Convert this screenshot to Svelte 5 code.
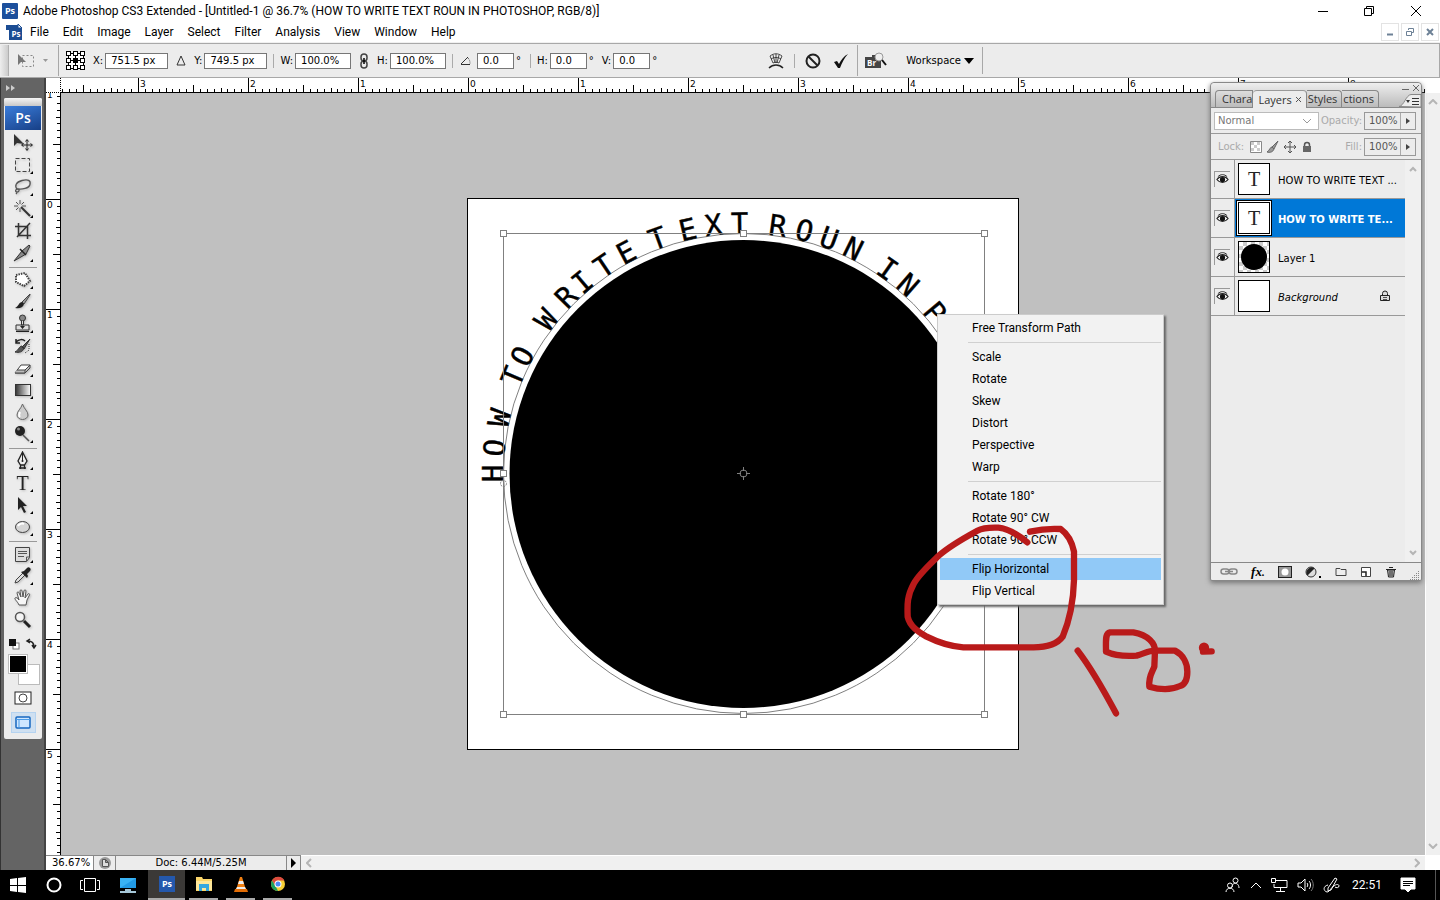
<script>
  const menus = ['File', 'Edit', 'Image', 'Layer', 'Select', 'Filter', 'Analysis', 'View', 'Window', 'Help'];

  const contextMenu = [
    ['Free Transform Path'],
    ['Scale', 'Rotate', 'Skew', 'Distort', 'Perspective', 'Warp'],
    ['Rotate 180°', 'Rotate 90° CW', 'Rotate 90° CCW'],
    ['Flip Horizontal', 'Flip Vertical']
  ];
  let hovered = $state('Flip Horizontal');

  let layers = $state([
    { name: 'HOW TO WRITE TEXT ...', kind: 'text' },
    { name: 'HOW TO WRITE TE...', kind: 'text' },
    { name: 'Layer 1', kind: 'shape' },
    { name: 'Background', kind: 'background' }
  ]);
  let selected = $state(1);

  // 20x20 tool glyphs
  const toolGroups = [
    [
      ['Move', '<path d="M1 1v12l3-3 7 1z" fill="#333"/><path d="M14 7v10M9 12h10M12.500 8.500l1.500-2 1.500 2M12.500 15.500l1.500 2 1.500-2M10.500 10.500l-2 1.500 2 1.500M17.500 10.500l2 1.500-2 1.500" fill="none" stroke="#222"/>'],
      ['Rectangular Marquee', '<rect x="2.500" y="3.500" width="14" height="13" fill="none" stroke="#444" stroke-dasharray="4 2"/>', 1],
      ['Lasso', '<path d="M4.500 12.500C1 9 3 5 9 3.500s9 0 8 4-8 5-12 4.500c-3 0-3 3-1 3s3-2 1-3M4 15c0 1-1 2-1 2" fill="none" stroke="#555" stroke-width="1.300"/>', 1],
      ['Magic Wand', '<path d="M8 8l9 9" stroke="#333" stroke-width="2"/><path d="M7 1v4M7 9v4M1 7h4M9 7h4M3 3l2.500 2.500M11 3L8.500 5.500M3 11l2.500-2.500" stroke="#555"/>', 1],
      ['Crop', '<path d="M2 5.500h12.500V18M5.500 2v12.500H18M4 16L17 2" fill="none" stroke="#333" stroke-width="1.500"/>'],
      ['Slice', '<path d="M1 18L9 8l7-6 1 1-4 8z" fill="#888" stroke="#333"/><path d="M7 6l6 6" stroke="#222" stroke-width="1.500"/>', 1]
    ],
    [
      ['Patch', '<path d="M3 5l9-2 5 8-6 5-8-4z" fill="#fff" stroke="#444" stroke-width="2" stroke-dasharray="1.500 1"/>', 1],
      ['Brush', '<path d="M17 2l-8 8 2 2 6-9z" fill="#999" stroke="#444"/><path d="M9 10c-3 0-3 4-7 6 4 1 8 0 9-4z" fill="#222"/>', 1],
      ['Clone Stamp', '<circle cx="9.500" cy="4" r="3" fill="#888" stroke="#333"/><path d="M8.500 7v4h2V7M3 11h13v5H3z" fill="#ddd" stroke="#333"/><path d="M7 12h5l-2.500 3zM3 17h13v1H3z" fill="#222"/>', 1],
      ['History Brush', '<path d="M17 3l-8 8 2 2zM9 10c-3 0-3 4-7 6 4 1 8 0 9-4z" fill="#555" stroke="#333"/><path d="M3 6c3-3 7-3 9-1M3 3v4h4" fill="none" stroke="#222" stroke-width="1.500"/><path d="M16 8v6l-4 3" fill="none" stroke="#333" stroke-dasharray="1 1"/>', 1],
      ['Eraser', '<path d="M2 15l6-8h9l-5 8z" fill="#fff" stroke="#444"/><path d="M2 15h10v-3H4M12 15l5-5V7l-5 5" fill="#bbb" stroke="#444"/>', 1],
      ['Gradient', '<defs><linearGradient id="grad"><stop stop-color="#333"/><stop offset="1" stop-color="#fff"/></linearGradient></defs><rect x="2.500" y="4.500" width="15" height="11" fill="url(#grad)" stroke="#333"/>', 1],
      ['Blur', '<path d="M9.500 2C8 7 4 9 4 13a5.500 4.500 0 0 0 11 0c0-4-4-6-5.500-11z" fill="#ccc" stroke="#666"/><path d="M7 10c-1 2-1 4 0 5" stroke="#fff" stroke-width="2" fill="none"/>', 1],
      ['Dodge', '<circle cx="7" cy="7" r="5" fill="#222"/><circle cx="5.500" cy="5" r="1.500" fill="#888"/><path d="M10 11l6 6" stroke="#555" stroke-width="1.500"/>', 1]
    ],
    [
      ['Pen', '<path d="M9.500 1L5 10l2.500 4h4l2.500-4zM6 17h7M7.500 14v4M11.500 14v4" fill="#eee" stroke="#222" stroke-width="1.300"/><path d="M9.500 3v7" stroke="#222"/><circle cx="9.500" cy="10" r="1" fill="#222"/>', 1],
      ['Type', '<text x="9.500" y="17" text-anchor="middle" font-family="Liberation Serif, serif" font-size="20" fill="#222">T</text>', 1],
      ['Path Selection', '<path d="M5 2v13l3-3 3 6 2-1-3-6h4z" fill="#222"/>', 1],
      ['Ellipse', '<ellipse cx="9.500" cy="10" rx="7" ry="5.500" fill="#d5d5d5" stroke="#444"/><path d="M5 9c1-2 4-3 6-2" stroke="#fff" stroke-width="2" fill="none"/>', 1]
    ],
    [
      ['Notes', '<path d="M2.500 3.500h14v10l-3 4h-11z" fill="#ddd" stroke="#444"/><path d="M5 7.500h9M5 9.500h9M5 12.500h6M13.500 17v-4h3" fill="none" stroke="#555"/>', 1],
      ['Eyedropper', '<path d="M2 17l1-3 7-7 2 2-7 7z" fill="#ddd" stroke="#444"/><path d="M8 6l6 6 1-2-1-2 3-3c2-2-1-5-3-3l-3 3z" fill="#222"/>', 1],
      ['Hand', '<path d="M6 17c-1-3-5-6-4-7s3 0 4 2L4 5c0-1.500 2-1.500 2 0l2 4-1-6c0-1.500 2-1.500 2 0l1 6 1-6c0-1.500 2-1.500 2 0l-1 7 3-4c1-1 2 0 1.500 1L14 12l-1 5z" fill="#f6f6f6" stroke="#555"/>'],
      ['Zoom', '<circle cx="7" cy="7" r="4.500" fill="#f5f5f5" stroke="#555" stroke-width="1.500"/><path d="M11 11l6 6" stroke="#222" stroke-width="3"/>']
    ]
  ];

  // type on a circle: centre angle of every glyph, degrees clockwise from due west
  const pathText = 'HOW TO WRITE TEXT ROUN IN P';
  const pathRadius = 240;
  const glyphAngles = [
    0, 6, 13, 18, 23, 28, 33, 38, 45, 50, 56, 62, 66, 70, 77, 83, 89, 93, 98, 104, 110, 116, 121, 125, 131, 135, 140
  ];
  const glyphX = glyphAngles
    .map((a) => Math.round(((a + 90) * Math.PI * pathRadius) / 180 - 9))
    .join(' ');

  const inch = 110;
  const sixteenths = Array.from({ length: 320 }, (_, i) => i - 160);
  const hInches = [-3, -2, -1, 0, 1, 2, 3, 4, 5, 6, 7, 8];
  const vInches = [-1, 0, 1, 2, 3, 4, 5];

  function tickLength(i) {
    if (i % 16 === 0) return 15;
    if (i % 8 === 0) return 8;
    return i % 4 === 0 ? 5 : 4;
  }

  const tickPos = (i) => Math.round((i * inch) / 16);

  const hTicks = sixteenths.map((i) => `M${tickPos(i)} 15v-${tickLength(i)}`).join('');
  const vTicks = sixteenths.map((i) => `M15 ${tickPos(i)}h-${tickLength(i)}`).join('');

  const handles = [
    [36, 35], [276, 35], [517, 35],
    [36, 275], [517, 275],
    [36, 516], [276, 516], [517, 516]
  ];
</script>

{#snippet field(label, value, width, unit)}
  <label class="field">
    <span>{label}</span>
    <input class={width} type="text" {value} />
    {#if unit}<span class="unit">{unit}</span>{/if}
  </label>
{/snippet}

<div class="app">
  <header class="titlebar">
    <svg class="ps-icon" viewBox="0 0 16 16" width="16" height="16">
      <rect width="16" height="16" rx="1" fill="#1c4f9c" />
      <text x="8" y="11" text-anchor="middle" font-size="9" font-weight="bold" fill="#fff">Ps</text>
    </svg>
    <h1>Adobe Photoshop CS3 Extended - [Untitled-1 @ 36.7% (HOW TO WRITE TEXT ROUN IN PHOTOSHOP, RGB/8)]</h1>
    <div class="window-buttons">
      <button aria-label="Minimize"><svg width="12" height="12"><path d="M1 6.500h10" /></svg></button>
      <button aria-label="Restore"><svg width="12" height="12"><path d="M1.500 3.500h7v7h-7zM3.500 3.500v-2h7v7h-2" /></svg></button>
      <button aria-label="Close"><svg width="12" height="12"><path d="M1 1l10 10M11 1L1 11" /></svg></button>
    </div>
  </header>

  <nav class="menubar">
    <svg class="doc-icon" viewBox="0 0 17 16" width="17" height="16">
      <path d="M0 1h13l3 3v12H3V6H0z" fill="#1b4c93" />
      <path d="M12 0v4h4z" fill="#fff" stroke="#1b4c93" />
      <text x="10" y="13" text-anchor="middle" font-size="8" font-weight="bold" fill="#fff">Ps</text>
    </svg>
    {#each menus as menu}
      <button>{menu}</button>
    {/each}
    <div class="doc-buttons">
      <button aria-label="Minimize document"><svg width="10" height="10"><path d="M2 7.500h6" stroke-width="2" /></svg></button>
      <button aria-label="Restore document"><svg width="10" height="10"><path d="M1.500 4.500h5v4h-5zM3.500 3V1.500h5v4H7" /></svg></button>
      <button aria-label="Close document"><svg width="10" height="10"><path d="M2 2l6 6M8 2L2 8" stroke-width="2" /></svg></button>
    </div>
  </nav>

  <div class="options">
    <div class="grip"></div>
    <button class="current-tool" aria-label="Transform tool">
      <svg width="34" height="20">
        <rect x="5.500" y="4.500" width="11" height="11" fill="none" stroke="#888" stroke-dasharray="2 2" />
        <path d="M1 3v11l3-3 5 0z" fill="#777" />
        <path d="M26 8h5l-2.500 3z" fill="#999" />
      </svg>
    </button>
    <button class="reference" aria-label="Reference point">
      <svg width="20" height="20" fill="#fff" stroke="#000">
        <path d="M2.500 2.500h15v15h-15zM9.500 2.500v15M2.500 9.500h15" />
        {#each [0.5, 7.5, 14.5] as y}
          {#each [0.5, 7.5, 14.5] as x}
            <rect {x} {y} width="4" height="4" fill={x === 7.5 && y === 7.5 ? '#000' : '#fff'} />
          {/each}
        {/each}
      </svg>
    </button>
    {@render field('X:', '751.5 px', 'wide')}
    <button class="icon" aria-label="Relative positioning">
      <svg width="14" height="14"><path d="M7 2l4 9H3z" fill="none" stroke="#333" /></svg>
    </button>
    {@render field('Y:', '749.5 px', 'wide')}
    <i class="sep"></i>
    {@render field('W:', '100.0%', 'mid')}
    <button class="icon" aria-label="Maintain aspect ratio">
      <svg width="14" height="16" fill="none" stroke="#444" stroke-width="1.5"><rect x="4" y="1" width="6" height="7" rx="3" /><rect x="4" y="8" width="6" height="7" rx="3" /><path d="M7 5v6" stroke="#000" /></svg>
    </button>
    {@render field('H:', '100.0%', 'mid')}
    <i class="sep"></i>
    <label class="field">
      <svg width="16" height="12"><path d="M2 9.500h9M2 9l7-7" fill="none" stroke="#333" /><path d="M9 3c2 2 2 4 2 6" fill="none" stroke="#555" stroke-dasharray="1 1" /></svg>
      <input class="narrow" type="text" value="0.0" aria-label="Rotate" />
      <span class="unit">°</span>
    </label>
    <i class="sep"></i>
    <div class="skew">
      {@render field('H:', '0.0', 'narrow', '°')}
      {@render field('V:', '0.0', 'narrow', '°')}
    </div>
    <div class="commit">
      <button aria-label="Warp mode">
        <svg width="18" height="18" fill="none" stroke="#222"><path d="M3 4c4-3 8-3 12 0l-3 7c-2-1-4-1-6 0zM9 2v9M6 3l2 8M12 3l-2 8M4 7c3-2 7-2 10 0" stroke-width=".8" /><path d="M2 16c4-4 10-4 14 0" stroke-width="1.500" /></svg>
      </button>
      <i class="sep"></i>
      <button aria-label="Cancel transform">
        <svg width="18" height="18"><circle cx="9" cy="9" r="6.500" fill="none" stroke="#222" stroke-width="2" /><path d="M4.500 4.500l9 9" stroke="#222" stroke-width="2" /></svg>
      </button>
      <button class="accept" aria-label="Commit transform">
        <svg width="18" height="18"><path d="M2 10l3-1 2 3c2-4 5-8 9-10-4 4-6 9-8 14H6z" fill="#111" /></svg>
      </button>
    </div>
    <div class="bridge">
      <button aria-label="Go to Bridge">
        <svg width="24" height="20">
          <path d="M1 6h7v-2h5v2h4v11H1z" fill="#444" />
          <text x="3" y="15" font-size="8" font-weight="bold" fill="#fff">Br</text>
          <circle cx="15" cy="6" r="4" fill="#eee" stroke="#999" /><path d="M18 9l4 5" stroke="#111" stroke-width="2" />
        </svg>
      </button>
      <button class="workspace-menu">Workspace <svg width="10" height="6"><path d="M0 0h10L5 6z" /></svg></button>
    </div>
  </div>

  <main class="workspace">
    <aside class="tool-dock">
      <button class="expand" aria-label="Expand tools"><svg width="10" height="7"><path d="M0 0l4 3-4 3zM5 0l4 3-4 3z" fill="#ccc" /></svg></button>
      <div class="tools">
        <div class="tools-grip"></div>
        <div class="tools-logo">Ps</div>
        {#each toolGroups as group, g}
          {#if g > 0}<hr />{/if}
          {#each group as [name, glyph, flyout]}
            <button class="tool" class:flyout aria-label={name}>
              <svg width="20" height="20">{@html glyph}</svg>
            </button>
          {/each}
        {/each}
        <div class="color-actions">
          <button aria-label="Default colors"><svg width="11" height="11"><rect x="4" y="4" width="6" height="6" fill="#fff" stroke="#777" /><rect width="7" height="7" fill="#111" /></svg></button>
          <button aria-label="Swap colors"><svg width="12" height="12"><path d="M3 3c4 0 6 2 6 6M5 1L2 3l3 2M7 7l2 3 2-3" fill="none" stroke="#222" stroke-width="1.500" /></svg></button>
        </div>
        <div class="swatches">
          <button class="background-color" aria-label="Background color"></button>
          <button class="foreground-color" aria-label="Foreground color"></button>
        </div>
        <button class="mode" aria-label="Quick mask"><svg width="18" height="14"><rect x="1" y="1" width="16" height="12" fill="#fff" stroke="#222" /><circle cx="9" cy="7" r="4" fill="none" stroke="#444" /></svg></button>
        <button class="mode active" aria-label="Screen mode"><svg width="18" height="14"><rect x="2" y="1" width="14" height="11" rx="1" fill="#cfe7ff" stroke="#1767c0" stroke-width="1.500" /><path d="M2 3.500h14M5 4v8" stroke="#4a9be8" /></svg></button>
      </div>
    </aside>

    <div class="document">
      <div class="corner"></div>
      <svg class="h-ruler" aria-hidden="true">
        <svg x="50%" overflow="visible">
          <g transform="translate(-275 0)">
            <path d={hTicks} transform="translate(.5 0)" />
            {#each hInches as n}
              <text x={n * inch + 2} y="9">{Math.abs(n)}</text>
            {/each}
          </g>
        </svg>
      </svg>
      <svg class="v-ruler" aria-hidden="true">
        <svg y="50%" overflow="visible">
          <g transform="translate(0 -275)">
            <path d={vTicks} transform="translate(0 .5)" />
            {#each vInches as n}
              <text x="1" y={n * inch + 9}>{Math.abs(n)}</text>
            {/each}
          </g>
        </svg>
      </svg>

      <div class="pasteboard">
        <div class="artboard">
          <svg class="art" viewBox="0 0 552 552" width="552" height="552">
            <rect x=".5" y=".5" width="551" height="551" fill="#fff" stroke="#000" />
            <circle cx="276.500" cy="276" r="234" />
            <path id="type-path" d="M276.500 515.500a240 240 0 0 1 0-480a240 240 0 0 1 0 480" fill="none" stroke="#808080" />
            <text class="type" x={glyphX}><textPath href="#type-path">{pathText}</textPath></text>
            <g fill="none" stroke="#808080">
              <rect x="36.500" y="35.500" width="481" height="481" />
              <circle cx="36.500" cy="285.500" r="3" stroke-dasharray="2 1" />
              <circle cx="276.500" cy="275.500" r="3.500" />
              <path d="M270 275.500h4M279 275.500h4M276.500 269v4M276.500 278v4" />
            </g>
            {#each handles as [x, y]}
              <rect x={x - 2.5} y={y - 2.5} width="6" height="6" fill="#fff" stroke="#808080" />
            {/each}
          </svg>

          <div class="context-menu" role="menu">
            {#each contextMenu as group, g}
              {#if g > 0}<hr />{/if}
              {#each group as item}
                <button role="menuitem" class:hovered={hovered === item} onmouseenter={() => (hovered = item)}>{item}</button>
              {/each}
            {/each}
          </div>

          <svg class="marker" viewBox="30 120 960 600" width="320" height="200">
            <path d="M412 187C385 165 350 145 325 143C295 142 275 145 262 152C220 175 170 205 145 228C110 262 85 285 72 310C50 350 52 375 53 410C60 440 85 455 110 470C150 490 190 500 220 502L430 502C470 502 500 495 518 470C535 430 550 370 552 300L552 215C545 180 530 160 512 147C480 145 450 148 420 155" />
            <path d="M563 512C600 560 630 610 678 700" />
            <path d="M795 512H855C880 525 892 550 892 575C892 605 880 615 870 618C840 632 805 628 778 620C775 590 785 580 793 560L795 512C795 490 775 465 730 457H660C645 460 648 480 648 515C670 525 700 530 740 527C765 520 775 512 795 512" />
            <path d="M939 503V515L965 514" />
            <circle cx="942" cy="503" r="6" />
          </svg>
        </div>
      </div>
      <div class="v-scroll">
        <svg width="10" height="6"><path d="M1 5l4-4 4 4" /></svg>
        <svg width="10" height="6"><path d="M1 1l4 4 4-4" /></svg>
      </div>

      <footer class="status">
        <input class="zoom" type="text" value="36.67%" aria-label="Zoom" />
        <button class="version" aria-label="Version Cue"><svg width="14" height="14"><circle cx="7" cy="7" r="6" fill="#999" /><path d="M4.500 3.500h3l3 3v4h-6zM7.500 3.500v3h3" fill="#ddd" stroke="#555" /></svg></button>
        <span class="doc-size">Doc: 6.44M/5.25M</span>
        <button class="more" aria-label="Status options"><svg width="6" height="10"><path d="M0 0l5 5-5 5z" /></svg></button>
        <div class="h-scroll">
          <svg width="6" height="10"><path d="M5 1L1 5l4 4" /></svg>
          <svg width="6" height="10"><path d="M1 1l4 4-4 4" /></svg>
        </div>
      </footer>
    </div>

    <section class="panel">
      <div class="panel-head">
        <div class="tabs">
          <button>Chara</button>
          <button class="current">Layers <svg width="7" height="7"><path d="M1 1l5 5M6 1L1 6" stroke="#555" /></svg></button>
          <button>Styles</button>
          <button>ctions</button>
        </div>
        <div class="panel-buttons">
          <svg width="20" height="8" stroke="#666" fill="none"><path d="M1 5.500h7M12 1l6 6M18 1l-6 6" /></svg>
          <svg width="22" height="13" fill="none" stroke="#888"><path d="M0 12.500C5 12 7 1 12 .500h10V13z" fill="#ececec" /><path d="M13 4.500h7M13 7.500h7M13 10.500h7" stroke="#333" /><path d="M7 6h4l-2 3z" fill="#333" stroke="none" /></svg>
        </div>
      </div>
      <div class="panel-row">
        <div class="blend">
          <select aria-label="Blend mode"><option>Normal</option></select>
          <svg width="10" height="6"><path d="M1 1l4 4 4-4" fill="none" stroke="#999" /></svg>
        </div>
        <label for="opacity">Opacity:</label>
        <div class="percent"><input id="opacity" type="text" value="100%" /><button aria-label="Opacity slider"><svg width="4" height="6"><path d="M0 0l4 3-4 3z" fill="#444" /></svg></button></div>
      </div>
      <div class="panel-row">
        <span class="lock-label">Lock:</span>
        <div class="locks">
          <button aria-label="Lock transparency"><svg width="12" height="12"><path d="M.5.5h11v11H.5z" fill="#fff" stroke="#888" /><path d="M1 1h3v3H1zM7 1h3v3H7zM4 4h3v3H4zM1 7h3v3H1zM7 7h3v3H7z" fill="#ccc" /></svg></button>
          <button aria-label="Lock pixels"><svg width="12" height="12"><path d="M11 0L5 6l2 2zM5 6c-2 0-2 3-5 5 3 1 6 0 7-3z" fill="#999" stroke="#666" /></svg></button>
          <button aria-label="Lock position"><svg width="12" height="12"><path d="M6 0v12M0 6h12M4 2l2-2 2 2M4 10l2 2 2-2M2 4L0 6l2 2M10 4l2 2-2 2" fill="none" stroke="#555" /></svg></button>
          <button aria-label="Lock all"><svg width="12" height="12"><path d="M3.500 6V4a2.500 2.500 0 0 1 5 0v2" fill="none" stroke="#555" stroke-width="1.500" /><rect x="2" y="5" width="8" height="6" fill="#666" /></svg></button>
        </div>
        <label for="fill">Fill:</label>
        <div class="percent"><input id="fill" type="text" value="100%" /><button aria-label="Fill slider"><svg width="4" height="6"><path d="M0 0l4 3-4 3z" fill="#444" /></svg></button></div>
      </div>
      <div class="list">
        <ul>
          {#each layers as layer, i}
            <li class:selected={selected === i}>
              <button class="eye" aria-label="Toggle visibility">
                <svg viewBox="0 0 14 12"><path d="M1 6c3-4 9-4 12 0-3 4-9 4-12 0z" fill="#fff" stroke="#222" stroke-width="1.300" /><circle cx="7" cy="6" r="2.800" fill="#111" /><path d="M2 3c3-3 7-3 10 0" fill="none" stroke="#222" /></svg>
              </button>
              <button class="layer" onclick={() => (selected = i)}>
                <span class="thumb {layer.kind}">
                  {#if layer.kind === 'text'}T{/if}
                  {#if layer.kind === 'shape'}<i></i>{/if}
                </span>
                <span class="name" class:italic={layer.kind === 'background'}>{layer.name}</span>
                {#if layer.kind === 'background'}
                  <svg class="padlock" width="12" height="12"><path d="M3.500 5V3.500a2.500 2.500 0 0 1 5 0V5M1.500 5.500h9v5h-9z" fill="#ddd" stroke="#222" /><path d="M4 7.500h4M4 9.500h4" stroke="#555" /></svg>
                {/if}
              </button>
            </li>
          {/each}
        </ul>
        <div class="list-scroll">
          <svg width="8" height="6"><path d="M1 5l3-3 3 3" /></svg>
          <svg width="8" height="6"><path d="M1 1l3 3 3-3" /></svg>
        </div>
      </div>
      <div class="panel-foot">
        <button aria-label="Link layers"><svg width="18" height="12" fill="none" stroke="#888" stroke-width="1.500"><rect x="1" y="3" width="8" height="5" rx="2.500" /><rect x="9" y="3" width="8" height="5" rx="2.500" /><path d="M5 5.500h8" /></svg></button>
        <button aria-label="Layer style" class="fx">fx<small>.</small></button>
        <button aria-label="Layer mask"><svg width="14" height="12"><rect x=".5" y=".5" width="13" height="11" fill="#999" stroke="#222" /><circle cx="7" cy="6" r="3.500" fill="#fff" /></svg></button>
        <button aria-label="Adjustment layer"><svg width="17" height="12"><circle cx="6" cy="6" r="5" fill="#ddd" stroke="#333" /><path d="M2.500 9.500a5 5 0 0 1 7-7z" fill="#222" /><path d="M14 10h2v2h-2z" /></svg></button>
        <button aria-label="New group"><svg width="12" height="12"><path d="M1 9.500v-7h4l1 1h5v6z" fill="#eee" stroke="#444" /></svg></button>
        <button aria-label="New layer"><svg width="12" height="12"><path d="M1.500 1.500h9v9h-9z" fill="#fff" stroke="#444" /><path d="M2 6h4v4" fill="none" stroke="#222" stroke-width="1.500" /></svg></button>
        <button aria-label="Delete layer"><svg width="12" height="12"><path d="M2.500 4h7l-1 7h-5z" fill="#bbb" stroke="#222" /><path d="M1 3.500h10M4 1.500h4M5 5v5M7 5v5" stroke="#222" /></svg></button>
        <svg class="resize" width="10" height="10" stroke="#888" stroke-dasharray="1 1"><path d="M8 1.500h2M6 3.500h4M4 5.500h6M2 7.500h8M0 9.500h10" /></svg>
      </div>
    </section>
  </main>

  <footer class="taskbar">
    <button aria-label="Start"><svg width="16" height="16" fill="#fff"><path d="M0 2l7-1v7H0zM8 1l8-1v8H8zM0 9h7v6l-7-1zM8 9h8v7l-8-1z" /></svg></button>
    <button aria-label="Cortana"><svg width="16" height="16"><circle cx="8" cy="8" r="6.500" fill="none" stroke="#fff" stroke-width="2" /></svg></button>
    <button aria-label="Task view"><svg width="20" height="16" fill="none" stroke="#fff"><path d="M4.500 1.500h11v13h-11zM3 3.500H.5v9H3M17 3.500h2.500v9H17" /></svg></button>
    <button class="pc" aria-label="This PC"><svg width="18" height="18"><rect x="1" y="2" width="16" height="10" fill="#39b3f5" /><path d="M1 12L17 2v10z" fill="#229be6" /><path d="M6 13h6v2H6zM1 15h16v2H1z" fill="#a6c7d8" /></svg></button>
    <button class="running active" aria-label="Photoshop">
      <svg width="16" height="16"><rect width="16" height="16" fill="#2458ac" /><text x="8" y="11" text-anchor="middle" font-size="9" font-weight="bold" fill="#fff">Ps</text></svg>
    </button>
    <button class="running" aria-label="File Explorer"><svg width="18" height="16"><path d="M1 1h6l1 2h9v12H1z" fill="#fbd66b" /><path d="M1 5h16v9H1z" fill="#ffe79a" /><path d="M4 8h10v7h-3v-3H7v3H4z" fill="#36a7df" /></svg></button>
    <button class="running" aria-label="VLC"><svg width="16" height="17"><path d="M7 1h2l4 13H3z" fill="#f28011" /><path d="M6 5h4l1 3H5zM4 11h8l1 2H3z" fill="#eee" /><path d="M2 13h12l1 3H1z" fill="#e46d05" /></svg></button>
    <button class="running" aria-label="Chrome">
      <svg width="16" height="16"><circle cx="8" cy="8" r="7" fill="#f7cf35" /><path d="M2 4.500a7 7 0 0 1 12.500 0H8a4 4 0 0 0-3 5z" fill="#dd4b3e" /><path d="M2 4.500L6 11l2 4A7 7 0 0 1 2 4.500z" fill="#1ba05e" /><circle cx="8" cy="8" r="3.500" fill="#fff" /><circle cx="8" cy="8" r="2.500" fill="#4c8bf5" /></svg>
    </button>
    <div class="tray">
      <svg width="16" height="16"><circle cx="10.500" cy="3.500" r="2.500" /><path d="M7 10c0-5 7-5 7 1" /><circle cx="5" cy="8.500" r="2.500" /><path d="M1 15c0-5 8-5 8 0" /></svg>
      <svg width="12" height="8"><path d="M1 7l5-5 5 5" /></svg>
      <svg width="17" height="14"><path d="M5 2.500h11v7H3V6M9.500 10v3M5 13.500h9M.5.5h4v4h-4z" /></svg>
      <svg width="17" height="14"><path d="M1 5h3l4-4v12L4 9H1z" /><path d="M10 5c1 1 1 3 0 4M12 3c2 2 2 6 0 8" /><path d="M14 1c3 3 3 9 0 12" stroke="#777" /></svg>
      <svg width="17" height="16"><path d="M5 11L12 1l2 1-6 11-3 1zM5 8c-5 1-5 6-1 7 3 0 4-5 7-6 2-2 5-2 5 0s-3 2-4 1" /></svg>
      <time>22:51</time>
      <svg width="16" height="16"><path d="M1 1h14v11h-4l-3 3-3-3H1z" fill="#fff" /><path d="M3 4.500h10M3 6.500h10M3 8.500h7" stroke="#000" /></svg>
      <i></i>
    </div>
  </footer>
</div>

<style>
  :global(body) {
    margin: 0;
  }
  .app {
    display: flex;
    flex-direction: column;
    min-height: 100vh;
    background: #fff;
    color: #000;
    font-family: Roboto, 'Open Sans', sans-serif;
    font-size: 12px;
    line-height: 16px;
    overflow: hidden;
  }
  .app :global(*) {
    box-sizing: border-box;
  }
  button,
  input,
  select {
    margin: 0;
    padding: 0;
    border: 0;
    background: none;
    color: inherit;
    font: inherit;
  }
  button {
    display: flex;
    align-items: center;
    justify-content: center;
  }
  svg {
    display: block;
    flex: none;
    font-family: 'Open Sans', sans-serif;
  }

  .titlebar {
    display: flex;
    align-items: center;
    height: 22px;
    padding-left: 2px;
  }
  h1 {
    flex: 1;
    margin: 0 0 0 5px;
    font-size: 12px;
    font-weight: normal;
    white-space: nowrap;
  }
  .window-buttons {
    display: flex;
  }
  .window-buttons button {
    width: 46px;
    height: 20px;
  }
  .window-buttons svg {
    fill: none;
    stroke: #000;
  }
  .window-buttons button:last-child {
    width: 48px;
  }

  .menubar {
    display: flex;
    align-items: center;
    height: 21px;
    padding-left: 6px;
    border-bottom: 1px solid #f0f0f0;
  }
  .menubar > button {
    padding: 0 7px;
  }
  .doc-buttons {
    display: flex;
    gap: 2px;
    margin-left: auto;
    padding-right: 1px;
  }
  .doc-buttons button {
    width: 18px;
    height: 18px;
    border: 1px solid #e3e3e3;
  }
  .doc-buttons svg {
    fill: none;
    stroke: #6d8196;
  }

  .options {
    display: flex;
    align-items: center;
    height: 35px;
    border: 1px solid #a8a8a8;
    border-left: 0;
    background: #ececec;
    font-family: 'DejaVu Sans', sans-serif;
    font-size: 10px;
  }
  .grip {
    width: 9px;
    height: 31px;
    border-right: 1px solid #b0b0b0;
    background: linear-gradient(90deg, #eee, #ccc);
  }
  .current-tool {
    width: 50px;
    height: 31px;
    border-right: 1px solid #a8a8a8;
  }
  .reference {
    width: 34px;
  }
  .field {
    display: flex;
    align-items: center;
    gap: 2px;
  }
  .field input {
    height: 16px;
    padding: 0 5px;
    border: 1px solid #777;
    background: #fff;
  }
  .field .wide {
    width: 63px;
  }
  .field .mid {
    width: 56px;
  }
  .field .narrow {
    width: 37px;
  }
  .icon {
    width: 26px;
  }
  .sep {
    width: 1px;
    height: 14px;
    margin: 0 6px;
    background: #aaa;
  }
  .unit {
    width: 8px;
  }
  .skew {
    display: flex;
    gap: 5px;
  }
  .commit {
    display: flex;
    align-items: center;
    height: 31px;
    margin-left: 104px;
    border-right: 1px solid #a8a8a8;
  }
  .commit button {
    width: 24px;
  }
  .commit .accept {
    width: 32px;
  }
  .bridge {
    display: flex;
    align-items: center;
    height: 27px;
    gap: 18px;
    padding: 0 8px 0 6px;
    border-right: 1px solid #a8a8a8;
  }
  .workspace-menu {
    gap: 3px;
  }

  .workspace {
    position: relative;
    display: flex;
    flex: 1;
  }
  .tool-dock {
    width: 46px;
    padding: 0 2px 0 3px;
    border-left: 1px solid #333;
    border-right: 2px solid #444;
    background: #646464;
  }
  .expand {
    width: 14px;
    height: 20px;
  }
  .tools {
    padding-bottom: 6px;
    border-radius: 2px;
    background: #ececec;
  }
  .tools-grip {
    height: 8px;
    border-radius: 2px 2px 0 0;
    background: linear-gradient(#f5f5f5, #c8c8c8);
  }
  .tools-logo {
    height: 24px;
    margin: 0 1px 2px;
    background: linear-gradient(160deg, #3a7ddb, #173f86);
    color: #fff;
    font-family: 'Open Sans', sans-serif;
    font-size: 14px;
    font-weight: 600;
    line-height: 24px;
    text-align: center;
  }
  .tool {
    position: relative;
    width: 100%;
    height: 22px;
  }
  .tool svg {
    filter: drop-shadow(1px 1px 1px #bbb);
  }
  .flyout::after {
    content: '';
    position: absolute;
    right: 9px;
    bottom: 2px;
    border-left: 3px solid transparent;
    border-bottom: 3px solid #000;
  }
  .tools hr {
    height: 1px;
    margin: 3px 5px 1px;
    border: 0;
    background: #999;
  }
  .color-actions {
    display: flex;
    justify-content: space-between;
    padding: 7px 5px 4px;
  }
  .swatches {
    display: grid;
    grid-template-columns: 10px 10px 12px;
    grid-template-rows: 10px 10px 11px;
    padding-left: 4px;
  }
  .swatches button {
    border: 1px solid #bbb;
  }
  .foreground-color {
    grid-area: 1 / 1 / 3 / 3;
    background: #000;
    box-shadow: inset 0 0 0 1px #fff;
  }
  .background-color {
    grid-area: 2 / 2 / 4 / 4;
    background: #fff;
  }
  .mode {
    width: 25px;
    height: 21px;
    margin: 2px auto 4px;
  }
  .mode.active {
    margin-bottom: 0;
    border: 1px solid #b5d3f0;
    background: #cfe0f1;
  }

  .document {
    display: grid;
    flex: 1;
    grid-template-columns: 15px 1fr 15px;
    grid-template-rows: 15px 1fr 15px;
    min-width: 0;
  }
  .corner {
    border-right: 1px dotted #000;
    border-bottom: 1px dotted #000;
  }
  .h-ruler {
    grid-column: 2 / 4;
    width: calc(100% - 15px);
    height: 15px;
    border-bottom: 1px solid #000;
  }
  .v-ruler {
    width: 15px;
    height: 100%;
    border-right: 1px solid #000;
  }
  .h-ruler path,
  .v-ruler path {
    stroke: #000;
  }
  .h-ruler text,
  .v-ruler text {
    font-family: 'DejaVu Sans', sans-serif;
    font-size: 9px;
  }
  .pasteboard {
    display: flex;
    align-items: center;
    justify-content: center;
    min-width: 0;
    background: #c0c0c0;
  }
  .artboard {
    position: relative;
  }
  .type {
    font-family: 'DejaVu Sans Mono', monospace;
    font-size: 29px;
    stroke: #000;
    stroke-width: 0.4;
  }
  .context-menu {
    position: absolute;
    top: 116px;
    left: 470px;
    width: 227px;
    padding: 2px;
    border: 1px solid #ccc;
    background: #f2f2f2;
    box-shadow: 2px 2px 2px #666;
  }
  .context-menu button {
    justify-content: flex-start;
    width: 100%;
    height: 22px;
    padding-left: 32px;
  }
  .context-menu .hovered {
    background: #91c9f7;
  }
  .context-menu hr {
    height: 1px;
    margin: 3px 0 3px 28px;
    border: 0;
    background: #d0d0d0;
  }
  .marker {
    position: absolute;
    top: 322px;
    left: 433px;
    fill: none;
    stroke: #b91a1a;
    stroke-width: 19;
    stroke-linecap: round;
    stroke-linejoin: round;
    pointer-events: none;
  }
  .v-scroll {
    display: flex;
    flex-direction: column;
    align-items: center;
    justify-content: space-between;
    padding: 6px 0;
    border-left: 1px solid #fff;
    background: #f0f0f0;
  }
  .v-scroll svg,
  .h-scroll svg,
  .list-scroll svg {
    fill: none;
    stroke: #b5b5b5;
    stroke-width: 2;
  }

  .status {
    grid-column: 1 / 4;
    display: flex;
    font-family: 'DejaVu Sans', sans-serif;
    font-size: 10px;
  }
  .status > * {
    border-top: 1px solid #888;
    border-right: 1px solid #888;
    background: #ececec;
  }
  .status .zoom {
    width: 48px;
    padding-left: 6px;
    background: #fff;
  }
  .version {
    width: 22px;
  }
  .doc-size {
    width: 171px;
    line-height: 14px;
    text-align: center;
  }
  .more {
    width: 14px;
  }
  .status .h-scroll {
    display: flex;
    flex: 1;
    align-items: center;
    justify-content: space-between;
    margin-right: 15px;
    padding: 0 5px;
    border-top-color: #fff;
    border-right: 0;
    background: #f0f0f0;
  }

  .panel {
    position: absolute;
    top: 4px;
    right: 18px;
    width: 212px;
    border: 1px solid #888;
    border-radius: 4px 4px 2px 2px;
    background: #ececec;
    box-shadow: 0 2px 5px #777;
    font-family: 'DejaVu Sans', sans-serif;
    font-size: 10px;
  }
  .panel-head {
    display: flex;
    align-items: flex-end;
    justify-content: space-between;
    height: 25px;
    border-bottom: 1px solid #888;
    background: linear-gradient(#eee, #bbb);
    border-radius: 4px 4px 0 0;
  }
  .tabs {
    display: flex;
    align-items: flex-end;
    padding-left: 4px;
    font-family: 'Open Sans', sans-serif;
    font-size: 11px;
  }
  .tabs button {
    height: 17px;
    padding: 0 4px 0 1px;
    border: 1px solid #888;
    border-bottom: 0;
    border-left: 0;
    border-radius: 0 4px 0 0;
    background: linear-gradient(#ddd, #bbb);
    color: #333;
  }
  .tabs button:first-child {
    padding: 0 0 0 6px;
    border-left: 1px solid #888;
    border-radius: 4px 0 0 0;
  }
  .tabs button.current {
    gap: 3px;
    height: 18px;
    margin-bottom: -1px;
    padding: 0 4px 0 5px;
    border-top-color: #999;
    border-radius: 4px 4px 0 0;
    background: #ececec;
  }
  .panel-buttons {
    display: flex;
    flex-direction: column;
    align-items: flex-end;
    gap: 2px;
  }
  .panel-row {
    display: flex;
    align-items: center;
    height: 26px;
    padding: 0 5px 0 3px;
    border-bottom: 1px solid #999;
    color: #aaa;
  }
  .blend {
    display: grid;
    grid-template-columns: 1fr 16px;
    align-items: center;
    width: 105px;
    height: 18px;
    border: 1px solid #bbb;
    background: #fff;
  }
  .blend select {
    grid-area: 1 / 1 / 2 / 3;
    height: 16px;
    padding-left: 3px;
    appearance: none;
    color: #777;
  }
  .blend svg {
    grid-area: 1 / 2;
    pointer-events: none;
  }
  .panel-row label {
    flex: 1;
    padding-right: 2px;
    text-align: right;
  }
  .percent {
    display: flex;
    width: 52px;
    height: 18px;
    border: 1px solid #999;
    color: #555;
  }
  .percent input {
    width: 35px;
    padding-left: 4px;
  }
  .percent button {
    flex: 1;
    border-left: 1px solid #aaa;
  }
  .lock-label {
    padding: 0 6px 0 4px;
  }
  .locks {
    display: flex;
    gap: 5px;
  }
  .list {
    display: flex;
    height: 403px;
    border-bottom: 1px solid #888;
  }
  ul {
    flex: 1;
    margin: 0;
    padding: 0;
    list-style: none;
  }
  li {
    display: flex;
    height: 39px;
    border-bottom: 1px solid #999;
  }
  .eye {
    width: 24px;
    padding-right: 2px;
    border-right: 1px solid #999;
  }
  .eye svg {
    width: 16px;
    height: 16px;
    padding: 1px;
    border-top: 1px solid #999;
    border-left: 1px solid #999;
  }
  .layer {
    flex: 1;
    justify-content: flex-start;
    padding-left: 3px;
  }
  .selected .layer {
    background: #0078d7;
    color: #fff;
    font-weight: bold;
  }
  .thumb {
    display: flex;
    align-items: center;
    justify-content: center;
    width: 32px;
    height: 32px;
    border: 1px solid #000;
    background: #fff;
    color: #222;
    font: 20px 'Liberation Serif', serif;
  }
  .selected .thumb {
    outline: 1px solid #fff;
    box-shadow: 0 0 0 2px #000;
  }
  .thumb.shape {
    background: repeating-conic-gradient(#ccc 0 25%, #fff 0 50%) 0 0 / 8px 8px;
  }
  .thumb i {
    width: 26px;
    height: 26px;
    border-radius: 50%;
    background: #000;
  }
  .name {
    padding: 4px 0 0 8px;
  }
  .italic {
    font-style: italic;
  }
  .padlock {
    margin: 0 14px 0 auto;
  }
  .list-scroll {
    display: flex;
    flex-direction: column;
    align-items: center;
    justify-content: space-between;
    width: 16px;
    padding: 6px 0;
    background: #f0f0f0;
  }
  .panel-foot {
    display: flex;
    align-items: center;
    justify-content: space-between;
    height: 17px;
    padding: 0 1px 0 9px;
  }
  .fx {
    font: italic bold 13px 'Liberation Serif', serif;
  }
  .resize {
    align-self: flex-end;
  }

  .taskbar {
    display: flex;
    height: 30px;
    background: #000;
    color: #fff;
  }
  .taskbar > button {
    width: 36px;
  }
  .taskbar .pc {
    width: 40px;
  }
  .taskbar .running {
    width: 29px;
    margin: 0 4px;
    border-bottom: 2px solid #aaa;
  }
  .taskbar .active {
    width: 37px;
    margin: 0;
    background: #3b3937;
  }
  .tray {
    display: flex;
    align-items: center;
    gap: 9px;
    margin-left: auto;
  }
  .tray svg {
    fill: none;
    stroke: #fff;
  }
  .tray time {
    margin: 0 9px 0 3px;
  }
  .tray i {
    width: 5px;
    height: 30px;
    margin-left: 10px;
    border-left: 1px solid #555;
  }
</style>
